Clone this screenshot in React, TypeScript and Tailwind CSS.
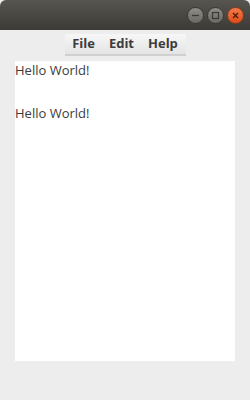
import React from 'react';

function TitleButton({ kind }: { kind: 'min' | 'max' | 'close' }) {
  const isClose = kind === 'close';
  return (
    <div
      className={
        'w-[17px] h-[17px] rounded-full flex items-center justify-center border ' +
        (isClose
          ? 'bg-gradient-to-b from-[#f37a4a] to-[#de4a15] border-[#8a3a1a]'
          : 'bg-gradient-to-b from-[#8e8c86] to-[#6b6964] border-[#3a3935]')
      }
    >
      <svg width="9" height="9" viewBox="0 0 9 9">
        {kind === 'min' && <line x1="1" y1="4.5" x2="8" y2="4.5" stroke="#3a3935" strokeWidth="1.3" />}
        {kind === 'max' && <rect x="1.5" y="1.5" width="6" height="6" fill="none" stroke="#3a3935" strokeWidth="1.2" />}
        {kind === 'close' && (
          <g stroke="#4a1a08" strokeWidth="1.3">
            <line x1="2" y1="2" x2="7" y2="7" />
            <line x1="7" y1="2" x2="2" y2="7" />
          </g>
        )}
      </svg>
    </div>
  );
}

export default function App() {
  return (
    <div
      className="w-[250px] h-[400px] flex flex-col bg-[#ededed] overflow-hidden"
      style={{ fontFamily: '"Open Sans", "DejaVu Sans", sans-serif' }}
    >
      <div className="h-[30px] shrink-0 rounded-t-[6px] bg-gradient-to-b from-[#57554f] to-[#3c3b37] flex items-center justify-end gap-[3px] pr-[6px]">
        <TitleButton kind="min" />
        <TitleButton kind="max" />
        <TitleButton kind="close" />
      </div>
      <div className="flex justify-center pt-[4px]">
        <div className="flex h-[22px] w-[121px] items-center justify-center gap-[14px] bg-gradient-to-b from-[#f7f7f7] to-[#e4e4e4] border-b-2 border-[#d0d0d0] text-[13px] font-bold text-[#3c3c3c]">
          <span>File</span>
          <span>Edit</span>
          <span>Help</span>
        </div>
      </div>
      <div className="mx-[15px] mt-[5px] h-[300px] bg-white text-[13px] leading-[17px] text-[#3c3c3c]">
        <div className="pt-[1px]">Hello World!</div>
        <div className="h-[26px]" />
        <div>Hello World!</div>
      </div>
    </div>
  );
}
